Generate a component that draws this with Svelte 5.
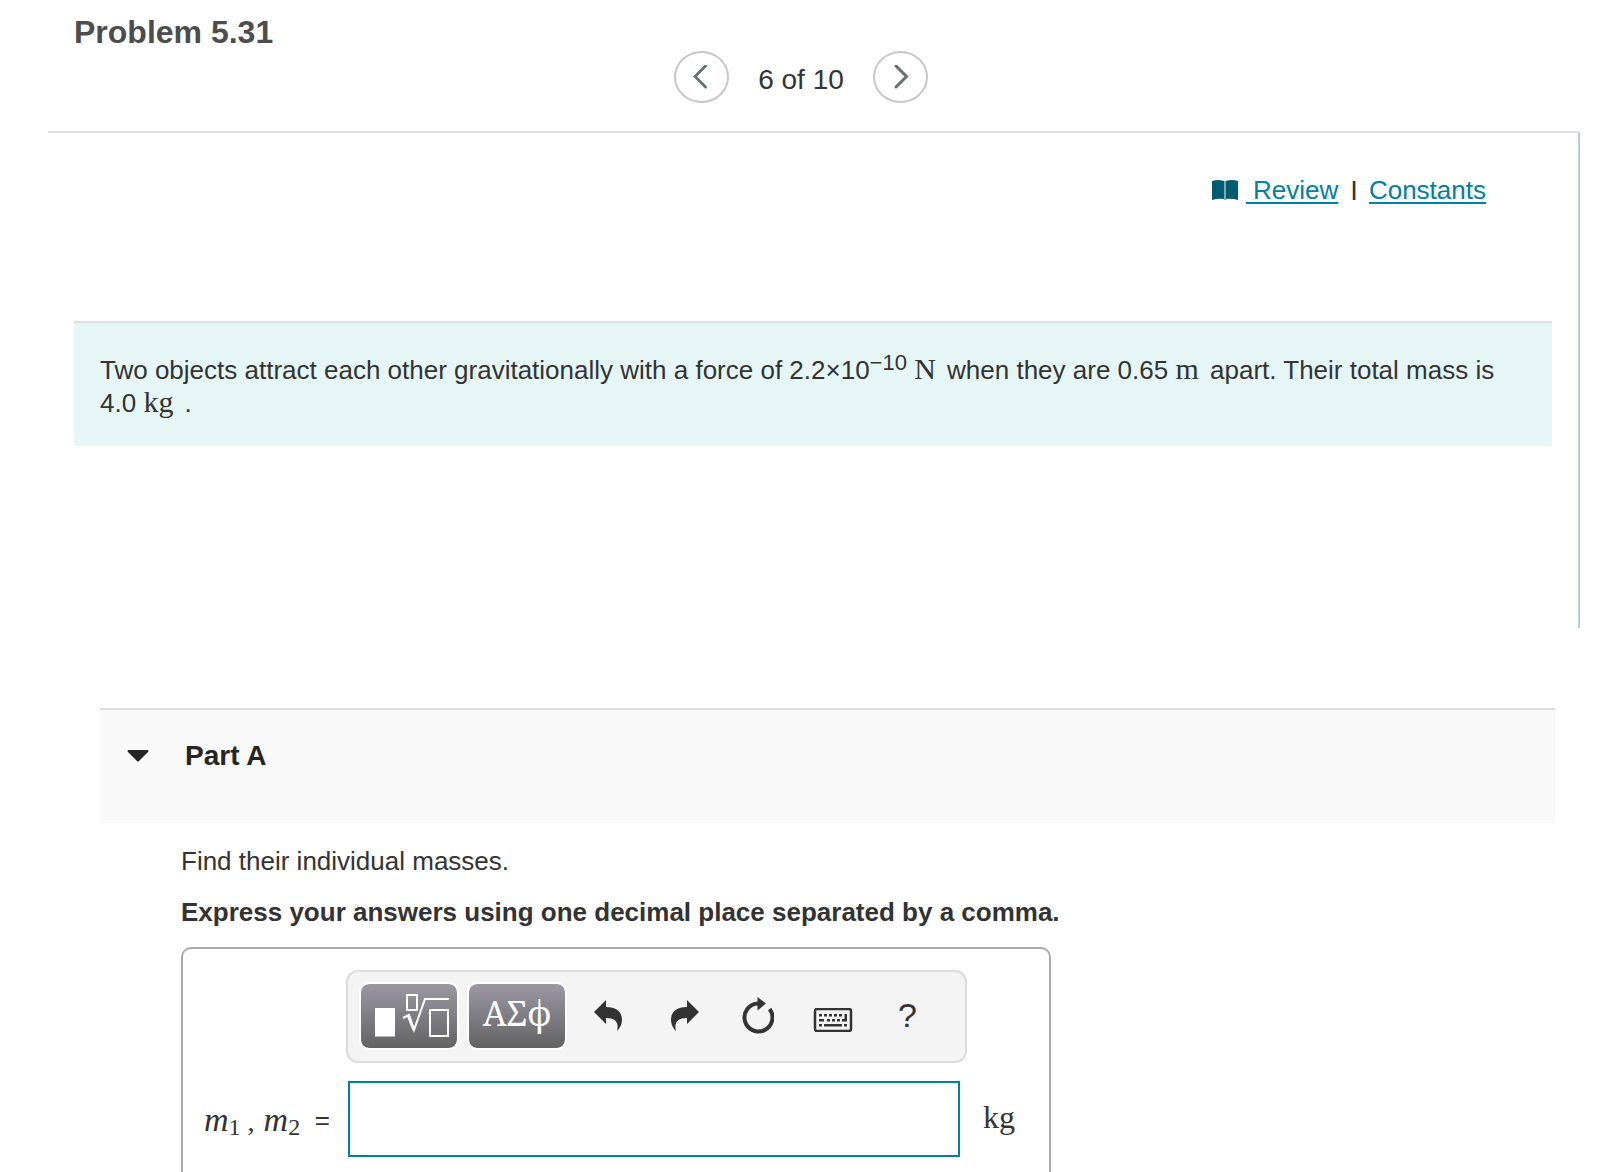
<script>
  let { title = 'Problem 5.31', current = 6, count = 10 } = $props();

  let answer = $state('');
  let open = $state(true);

  // small keys drawn inside the keyboard icon: x, y, width
  const KEYS = [
    [6, 6, 3], [11, 6, 3], [16, 6, 3], [21, 6, 3], [26, 6, 3],
    [6, 11, 5], [14, 11, 3], [19, 11, 3], [24, 11, 3],
    [6, 16, 3], [11, 16, 18], [31, 16, 3]
  ];
</script>

<div class="page">
  <header>
    <h1>{title}</h1>
    <nav aria-label="Problems">
      <button class="round" aria-label="Previous problem">
        <svg width="18" height="24" viewBox="0 0 18 24"><path d="M12.500 1 2 11.500 12.500 22" /></svg>
      </button>
      <span class="count">{current} of {count}</span>
      <button class="round" aria-label="Next problem">
        <svg width="18" height="24" viewBox="0 0 18 24"><path d="M5 1l10.500 10.500L5 22" /></svg>
      </button>
    </nav>
  </header>

  <section class="intro">
    <div class="links">
      <svg width="26" height="21" viewBox="0 0 26 21" aria-hidden="true">
        <path d="M0 1q6-2 12 0v18q-6-1-12 1zM14 1q6-2 12 0v19q-6-2-12-1z" fill="#005a70" />
        <path d="M12 1h2v19h-2z" fill="#7fa9b5" />
      </svg>
      <a href="#review">&nbsp;Review</a>
      <span class="bar">|</span>
      <a href="#constants">Constants</a>
    </div>
    <p class="statement">
      Two objects attract each other gravitationally with a force of 2.2×10<sup>−10</sup>
      <span class="math">N</span> when they are 0.65 <span class="math">m</span> apart. Their total mass is 4.0
      <span class="math">kg</span>&nbsp;.
    </p>
  </section>

  <section class="part">
    <h2>
      <button class="toggle" aria-expanded={open} onclick={() => (open = !open)}>
        <svg width="22" height="12" viewBox="0 0 22 12"><path d="M1 0h20q1 1 0 2l-9 9q-1 1-2 0L1 2q-1-1 0-2z" fill="#252525" /></svg>
        Part A
      </button>
    </h2>

    {#if open}
      <div class="body">
        <p>Find their individual masses.</p>
        <p><strong>Express your answers using one decimal place separated by a comma.</strong></p>

        <div class="answer">
          <div class="toolbar" role="toolbar" aria-label="Equation tools">
            <button class="key" aria-label="Templates">
              <svg width="96" height="64" viewBox="0 0 96 64" fill="none" stroke="#fff" stroke-width="2">
                <path d="M14 24h20v28.500H14z" fill="#fff" stroke="none" />
                <path d="M46 11h10v15H46z" />
                <path d="M69 26h18v26H69z" />
                <path d="M42 34l6-3 5 15 11-31h24" />
                <path d="M47 31l6 15" stroke-width="3" />
              </svg>
            </button>
            <button class="key greek" aria-label="Symbols">ΑΣϕ</button>
            <button class="tool" aria-label="Undo">
              <svg width="28" height="32" viewBox="0 0 28 32"><path d="M0 12 12 0v7c11 0 16 5 16 13 0 5-3 9-5 11 2-8-1-13-11-13v6z" /></svg>
            </button>
            <button class="tool" aria-label="Redo">
              <svg width="32" height="32" viewBox="-4 0 32 32"><path d="M28 12 16 0v7C5 7 0 12 0 20c0 5 3 9 5 11-2-8 1-13 11-13v6z" /></svg>
            </button>
            <button class="tool" aria-label="Reset">
              <svg width="32" height="38" viewBox="0 0 32 38">
                <path d="M16 6.500a14 14 0 1 0 11.600 5.500" fill="none" stroke="#333" stroke-width="4" />
                <path d="M15.500 0l8.500 6.500-8.500 7z" />
              </svg>
            </button>
            <button class="tool" aria-label="Keyboard shortcuts">
              <svg class="low" width="40" height="24" viewBox="0 0 40 24">
                <rect x="2" y="1" width="36" height="22" rx="2" fill="none" stroke="#333" stroke-width="2.500" />
                {#each KEYS as [x, y, w]}
                  <rect {x} {y} width={w} height="2.500" />
                {/each}
                <path d="M31.500 6H34v7.500h-5V11h2.500z" />
              </svg>
            </button>
            <button class="tool help" aria-label="Help">?</button>
          </div>

          <label class="name" for="masses">
            <span><i>m</i><sub>1</sub><span class="comma">,</span><i>m</i><sub>2</sub></span>
            <span class="eq">=</span>
          </label>
          <input id="masses" type="text" autocomplete="off" bind:value={answer} />
          <span class="unit">kg</span>
        </div>
      </div>
    {/if}
  </section>
</div>

<style>
  :global(body) {
    margin: 0;
    background: #fff;
  }
  .page {
    display: flex;
    flex-direction: column;
    box-sizing: border-box;
    min-height: 100vh;
    padding: 0 40px 0 48px;
    color: #333;
    font-family: 'Liberation Sans', Arial, Helvetica, sans-serif;
    font-size: 26px;
    line-height: 33px;
  }
  h1,
  h2,
  p {
    margin: 0;
  }
  button {
    padding: 0;
    border: 0;
    background: none;
    color: inherit;
    font: inherit;
    cursor: pointer;
  }
  header {
    padding: 16px 52px 28px 26px;
    border-bottom: 2px solid #e0e0e0;
  }
  h1 {
    margin-bottom: 2px;
    color: #4d4d4d;
    font-size: 32px;
    line-height: 33px;
  }
  nav {
    display: flex;
    align-items: center;
    justify-content: center;
    gap: 29px;
  }
  .round {
    display: flex;
    align-items: center;
    justify-content: center;
    box-sizing: border-box;
    width: 55px;
    height: 52px;
    border: 2px solid #c7c7c7;
    border-radius: 50%;
  }
  .round path {
    fill: none;
    stroke: #6a7070;
    stroke-width: 3;
    stroke-linecap: round;
  }
  .count {
    padding-top: 4px;
    font-size: 28px;
  }

  .intro {
    box-sizing: border-box;
    min-height: 495px;
    padding: 41px 26px 0;
    border-right: 2px solid #bccbdd;
  }
  .links {
    display: flex;
    align-items: center;
    justify-content: flex-end;
    margin: 0 66px 114px 0;
  }
  a {
    color: #007fa3;
    text-decoration-thickness: 2px;
    text-underline-offset: 3px;
  }
  .links svg {
    margin-right: 8px;
  }
  .bar {
    margin: 0 12px 0 13px;
    padding-bottom: 3px;
    font-size: 20px;
    font-weight: bold;
    line-height: 30px;
  }
  .statement {
    padding: 31px 52px 26px 26px;
    border-top: 2px solid #dce0e0;
    background: #e6f6f7;
  }
  sup {
    font-size: 22px;
    line-height: 0;
    vertical-align: 9px;
  }
  .math,
  .unit {
    font-family: 'Liberation Serif', 'Times New Roman', serif;
    font-size: 30px;
    line-height: 0;
  }
  .math {
    margin-right: 4px;
  }

  .part {
    display: flex;
    flex: 1;
    flex-direction: column;
    margin: 80px 25px 0 52px;
  }
  h2 {
    padding: 29px 27px 51px;
    border-top: 2px solid #dcdcdc;
    background: #f9f9f9;
    color: #252525;
    font-size: 28px;
  }
  .toggle {
    display: flex;
    align-items: center;
    gap: 36px;
  }
  .body {
    display: flex;
    flex: 1;
    flex-direction: column;
    padding: 22px 0 0 81px;
  }
  .body p {
    margin-bottom: 18px;
  }
  .answer {
    display: grid;
    flex: 1;
    grid-template-columns: 148px 612px 1fr;
    grid-template-rows: auto auto 1fr;
    gap: 18px 0;
    box-sizing: border-box;
    width: 870px;
    max-width: 100%;
    padding: 21px 0 0 17px;
    border: 2px solid #a9a9a9;
    border-bottom: 0;
    border-radius: 10px 10px 0 0;
  }
  .toolbar {
    display: flex;
    grid-column: 2 / 4;
    align-items: center;
    justify-self: start;
    box-sizing: border-box;
    height: 93px;
    margin-left: -2px;
    padding: 0 20px 2px 11px;
    border: 2px solid #dcdcdc;
    border-radius: 12px;
    background: #f4f4f4;
  }
  .key {
    display: flex;
    align-items: center;
    justify-content: center;
    box-sizing: border-box;
    width: 100px;
    height: 68px;
    margin-right: 8px;
    border: 2px solid #fff;
    border-radius: 10px;
    background: linear-gradient(#9b98a4, #636363) padding-box;
    color: #fff;
  }
  .greek {
    margin-right: 3px;
    padding-bottom: 5px;
    font-family: 'Noto Serif', 'DejaVu Serif', 'Liberation Serif', serif;
    font-size: 34px;
  }
  .tool {
    display: flex;
    align-items: center;
    justify-content: center;
    width: 75px;
    height: 68px;
  }
  .tool svg {
    fill: #333;
  }
  .tool .low {
    margin-top: 8px;
  }
  .help {
    font-size: 34px;
  }
  .name {
    display: flex;
    align-items: center;
    justify-content: space-between;
    padding: 2px 18px 0 4px;
    font-family: 'Liberation Serif', 'Times New Roman', serif;
    font-size: 34px;
  }
  sub {
    font-size: 24px;
    line-height: 0;
    vertical-align: -4px;
  }
  .comma {
    margin: 0 9px 0 7px;
    font-size: 28px;
  }
  .eq {
    font-family: 'Liberation Sans', Arial, sans-serif;
    font-size: 26px;
  }
  input {
    box-sizing: border-box;
    width: 100%;
    height: 76px;
    padding: 0 12px;
    border: 2px solid #007fa3;
    background: #fff;
    color: inherit;
    font: inherit;
    outline: 0;
  }
  .unit {
    align-self: center;
    padding: 0 0 4px 23px;
    font-size: 32px;
  }
</style>
